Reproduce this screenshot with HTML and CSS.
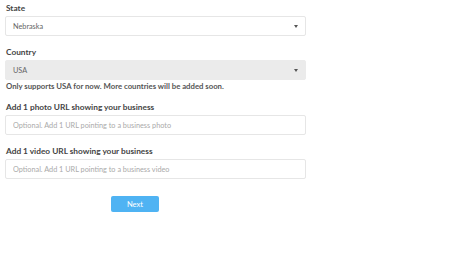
FILE: index.html
```html
<!DOCTYPE html>
<html lang="en">
<head>
    <meta charset="UTF-8">
    <title>Business location</title>
    <link rel="stylesheet" href="styles.css">
</head>
<body>
    <form class="form">
        <div class="field">
            <label>State</label>
            <div class="select">
                <span>Nebraska</span>
                <span class="caret"></span>
            </div>
        </div>

        <div class="field">
            <label>Country</label>
            <div class="select disabled">
                <span>USA</span>
                <span class="caret"></span>
            </div>
            <p class="help">Only supports USA for now. More countries will be added soon.</p>
        </div>

        <div class="field">
            <label>Add 1 photo URL showing your business</label>
            <input type="text" placeholder="Optional. Add 1 URL pointing to a business photo">
        </div>

        <div class="field">
            <label>Add 1 video URL showing your business</label>
            <input type="text" placeholder="Optional. Add 1 URL pointing to a business video">
        </div>

        <div class="actions">
            <button type="button" class="btn-next">Next</button>
        </div>
    </form>
</body>
</html>
```

FILE: styles.css
```css
body {
    margin: 0;
    padding: 0 5px;
    background-color: #fff;
    color: #333;
    font-family: Lato, "Open Sans", sans-serif;
    font-size: 8px;
}

.form {
    width: 301px;
}

.field {
    padding-top: 3px;
    margin-bottom: 8px;
}

label {
    display: block;
    font-weight: bold;
    font-size: 8.3px;
    line-height: 10px;
    margin-bottom: 3px;
    margin-left: 1px;
    color: #444;
}

.select,
input {
    box-sizing: border-box;
    display: flex;
    align-items: center;
    justify-content: space-between;
    width: 301px;
    height: 20px;
    padding: 0 7px;
    border: 1px solid #e6e6e6;
    border-radius: 2px;
    background-color: #fff;
    color: #666;
    font-family: inherit;
    font-size: 7.3px;
}

.select.disabled {
    background-color: #ebebeb;
    border-color: #ebebeb;
}

.caret {
    width: 0;
    height: 0;
    border-left: 2px solid transparent;
    border-right: 2px solid transparent;
    border-top: 3px solid #555;
}

input::placeholder {
    color: #aaa;
}

.help {
    margin: 1px 0 0 1px;
    font-weight: bold;
    font-size: 7.75px;
    line-height: 10px;
    color: #555;
}

.actions {
    display: flex;
    justify-content: center;
    width: 260px;
    padding-top: 9px;
}

.btn-next {
    width: 48px;
    height: 16px;
    border: none;
    border-radius: 2px;
    background-color: #4fb3f3;
    color: #fff;
    font-family: inherit;
    font-size: 7.6px;
}
```
